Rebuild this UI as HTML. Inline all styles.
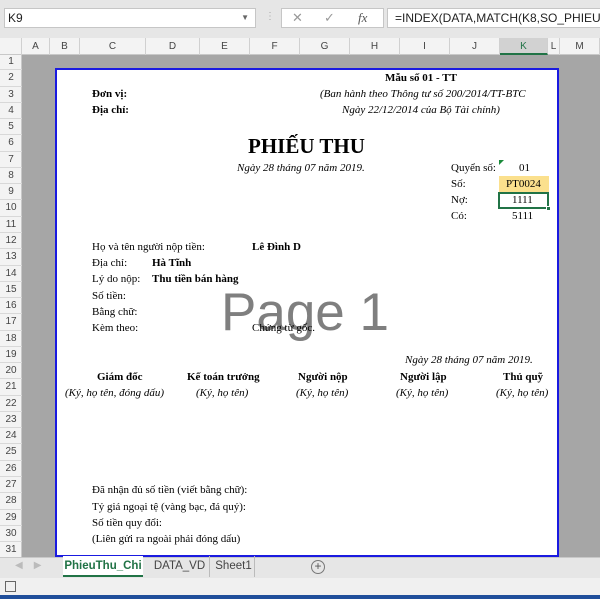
<!DOCTYPE html>
<html><head><meta charset="utf-8"><style>
*{margin:0;padding:0;box-sizing:border-box}
body{width:600px;height:599px;overflow:hidden;background:#e6e6e6;position:relative;font-family:"Liberation Sans",sans-serif}
.a{position:absolute;white-space:nowrap}
.t{position:absolute;white-space:nowrap;font-family:"Liberation Serif",serif;font-size:11px;line-height:16px;color:#000}
.b{font-weight:bold}.i{font-style:italic}
.rh{position:absolute;left:0;width:22px;font-size:10px;color:#444;text-align:center;line-height:16px}
.ch{position:absolute;top:38px;height:17px;font-size:10px;color:#444;text-align:center;line-height:17px;border-right:1px solid #d0d0d0}
</style></head><body>
<div class="a" style="left:0;top:0;width:600px;height:34px;background:#e6e6e6"></div>
<div class="a" style="left:4px;top:8px;width:252px;height:20px;background:#fff;border:1px solid #c6c6c6;font-size:12px;line-height:18px;padding-left:3px;color:#222">K9<span style="position:absolute;right:6px;font-size:8px;color:#666">▼</span></div>
<div class="a" style="top:11px;color:#aaa;font-size:10px;left:265px">⋮</div>
<div class="a" style="left:281px;top:8px;width:103px;height:20px;background:#fff;border:1px solid #c6c6c6;font-size:13px;line-height:18px;color:#999">
<span style="position:absolute;left:10px">✕</span><span style="position:absolute;left:42px">✓</span><span style="position:absolute;left:76px;font-family:'Liberation Serif';font-style:italic;color:#555">fx</span></div>
<div class="a" style="left:387px;top:8px;width:220px;height:20px;background:#fff;border:1px solid #c6c6c6;font-size:12px;line-height:18px;padding-left:7px;color:#222">=INDEX(DATA,MATCH(K8,SO_PHIEU,0</div>
<div class="a" style="left:0;top:38px;width:600px;height:17px;background:#f3f3f3;border-bottom:1px solid #c8c8c8"></div>
<div class="ch" style="left:0;width:22px"></div>
<div class="ch" style="left:22px;width:28px">A</div>
<div class="ch" style="left:50px;width:30px">B</div>
<div class="ch" style="left:80px;width:66px">C</div>
<div class="ch" style="left:146px;width:54px">D</div>
<div class="ch" style="left:200px;width:50px">E</div>
<div class="ch" style="left:250px;width:50px">F</div>
<div class="ch" style="left:300px;width:50px">G</div>
<div class="ch" style="left:350px;width:50px">H</div>
<div class="ch" style="left:400px;width:50px">I</div>
<div class="ch" style="left:450px;width:50px">J</div>
<div class="ch" style="left:500px;width:48px;background:#d2d2d2;color:#217346;border-bottom:2px solid #217346">K</div>
<div class="ch" style="left:548px;width:12px">L</div>
<div class="ch" style="left:560px;width:40px">M</div>
<div class="a" style="left:22px;top:55px;width:578px;height:503px;background:#a6a6a6"></div>
<div class="a" style="left:0;top:55px;width:22px;height:503px;background:#f3f3f3;border-right:1px solid #c8c8c8"></div>
<div id="rows"></div>
<div class="a" style="left:55px;top:68px;width:504px;height:489px;background:#fff;border:2px solid #1a1ae0"></div>
<div class="a" style="left:221px;top:282px;font-size:53px;color:#7f7f7f;line-height:62px">Page 1</div>

<div class="t b" style="left:385px;top:70px">Mẫu số 01 - TT</div>
<div class="t b" style="left:92px;top:86px">Đơn vị:</div>
<div class="t i" style="left:320px;top:86px">(Ban hành theo Thông tư số 200/2014/TT-BTC</div>
<div class="t b" style="left:92px;top:102px">Địa chỉ:</div>
<div class="t i" style="left:342px;top:102px">Ngày 22/12/2014 của Bộ Tài chính)</div>
<div class="t b" style="left:248px;top:133px;font-size:21px;line-height:26px">PHIẾU THU</div>
<div class="t i" style="left:237px;top:160px">Ngày 28 tháng 07 năm 2019.</div>
<div class="t" style="left:451px;top:160px">Quyển số:</div>
<div class="a" style="left:499px;top:160px;border-top:5px solid #1a8a3a;border-right:5px solid transparent"></div>
<div class="t" style="left:519px;top:160px">01</div>
<div class="t" style="left:451px;top:176px">Số:</div>
<div class="a" style="left:499px;top:176px;width:50px;height:16px;background:#fbe08d"></div>
<div class="t" style="left:506px;top:176px">PT0024</div>
<div class="t" style="left:451px;top:192px">Nợ:</div>
<div class="a" style="left:498px;top:192px;width:51px;height:17px;border:2px solid #217346"></div>
<div class="a" style="left:546px;top:206px;width:5px;height:5px;background:#217346;border:1px solid #fff"></div>
<div class="t" style="left:512px;top:192px">1111</div>
<div class="t" style="left:451px;top:208px">Có:</div>
<div class="t" style="left:512px;top:208px">5111</div>

<div class="t" style="left:92px;top:239px">Họ và tên người nộp tiền:</div>
<div class="t b" style="left:252px;top:239px">Lê Đình D</div>
<div class="t" style="left:92px;top:255px">Địa chỉ:</div>
<div class="t b" style="left:152px;top:255px">Hà Tĩnh</div>
<div class="t" style="left:92px;top:271px">Lý do nộp:</div>
<div class="t b" style="left:152px;top:271px">Thu tiền bán hàng</div>
<div class="t" style="left:92px;top:288px">Số tiền:</div>
<div class="t" style="left:92px;top:304px">Bằng chữ:</div>
<div class="t" style="left:92px;top:320px">Kèm theo:</div>
<div class="t" style="left:252px;top:320px">Chứng từ gốc.</div>

<div class="t i" style="left:405px;top:352px">Ngày 28 tháng 07 năm 2019.</div>
<div class="t b" style="left:97px;top:369px">Giám đốc</div>
<div class="t b" style="left:187px;top:369px">Kế toán trưởng</div>
<div class="t b" style="left:298px;top:369px">Người nộp</div>
<div class="t b" style="left:400px;top:369px">Người lập</div>
<div class="t b" style="left:503px;top:369px">Thủ quỹ</div>
<div class="t i" style="left:65px;top:385px">(Ký, họ tên, đóng dấu)</div>
<div class="t i" style="left:196px;top:385px">(Ký, họ tên)</div>
<div class="t i" style="left:296px;top:385px">(Ký, họ tên)</div>
<div class="t i" style="left:396px;top:385px">(Ký, họ tên)</div>
<div class="t i" style="left:496px;top:385px">(Ký, họ tên)</div>

<div class="t" style="left:92px;top:482px">Đã nhận đủ số tiền (viết bằng chữ):</div>
<div class="t" style="left:92px;top:499px">Tỷ giá ngoại tệ (vàng bạc, đá quý):</div>
<div class="t" style="left:92px;top:515px">Số tiền quy đổi:</div>
<div class="t" style="left:92px;top:531px">(Liên gửi ra ngoài phải đóng dấu)</div>

<div class="a" style="left:0;top:557px;width:600px;height:21px;background:#e6e6e6;border-top:1px solid #c8c8c8"></div>
<div class="a" style="left:15px;top:560px;font-size:10px;color:#bbb">◀&nbsp;&nbsp;&nbsp;&nbsp;▶</div>
<div class="a" style="left:63px;top:556px;width:80px;height:21px;background:#fff;border-bottom:2px solid #217346;font-size:11.5px;font-weight:bold;color:#217346;text-align:center;line-height:20px">PhieuThu_Chi</div>
<div class="a" style="left:150px;top:556px;width:60px;height:21px;font-size:11.5px;color:#444;text-align:center;line-height:21px;border-right:1px solid #bbb">DATA_VD</div>
<div class="a" style="left:213px;top:556px;width:42px;height:21px;font-size:11.5px;color:#444;text-align:center;line-height:21px;border-right:1px solid #bbb">Sheet1</div>
<div class="a" style="left:311px;top:560px;width:14px;height:14px;border:1px solid #777;border-radius:50%;font-size:12px;line-height:11px;text-align:center;color:#555">+</div>
<div class="a" style="left:0;top:578px;width:600px;height:17px;background:#f0f0f0"></div>
<div class="a" style="left:5px;top:581px;width:11px;height:11px;border:1px solid #666"></div>
<div class="a" style="left:0;top:595px;width:600px;height:4px;background:#1f4e9a"></div>
<script>
var h='';for(var r=1;r<=31;r++){var y=54+(r-1)*16.27;h+='<div class="rh" style="top:'+y+'px;height:16.27px;border-bottom:1px solid #d8d8d8">'+r+'</div>';}
document.getElementById('rows').innerHTML=h;
</script>
</body></html>
